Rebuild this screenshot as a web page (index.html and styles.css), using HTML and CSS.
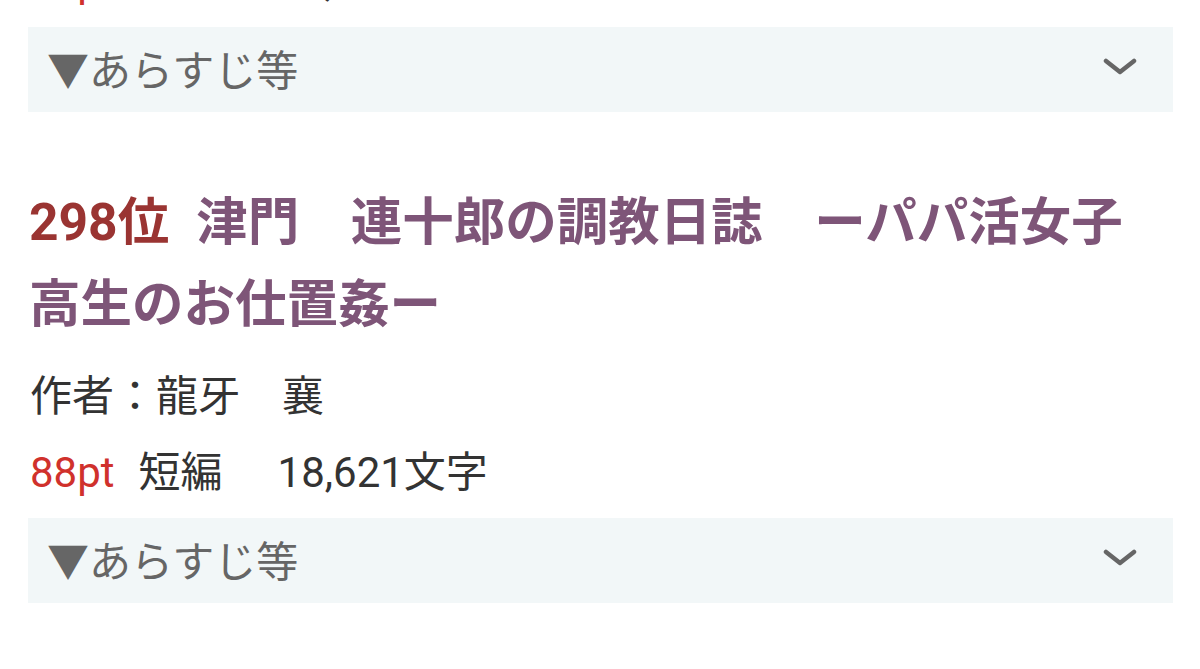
FILE: index.html
```html
<!DOCTYPE html>
<html lang="ja">
<head>
<meta charset="utf-8">
<title>ランキング</title>
<link rel="stylesheet" href="styles.css">
</head>
<body>
<div class="list">
  <div class="entry entry-partial">
    <div class="stats"><span class="pt">88pt</span><span class="type">短編</span><span class="chars">21,593文字</span></div>
    <div class="summary"><span class="summary-label">▼あらすじ等</span>
      <svg class="chev" width="34" height="20" viewBox="0 0 34 20"><path d="M3 4 L17 15 L31 4" fill="none" stroke="#666" stroke-width="4.5" stroke-linecap="round" stroke-linejoin="round"/></svg>
    </div>
  </div>
  <div class="entry">
    <h3 class="title"><span class="rank">298位</span>津門　連十郎の調教日誌　ーパパ活女子高生のお仕置姦ー</h3>
    <div class="author">作者：龍牙　襄</div>
    <div class="stats"><span class="pt">88pt</span><span class="type">短編</span><span class="chars">18,621文字</span></div>
    <div class="summary"><span class="summary-label">▼あらすじ等</span>
      <svg class="chev" width="34" height="20" viewBox="0 0 34 20"><path d="M3 4 L17 15 L31 4" fill="none" stroke="#666" stroke-width="4.5" stroke-linecap="round" stroke-linejoin="round"/></svg>
    </div>
  </div>
</div>
</body>
</html>
```
FILE: styles.css
```css
html, body {
  margin: 0;
  padding: 0;
  background: #fff;
}
body {
  font-family: Roboto, "Noto Sans CJK JP", sans-serif;
  color: #333;
  overflow: hidden;
}
.list {
  margin-top: -56px;
  padding: 0 27px 0 28px;
}
.entry-partial {
  margin-bottom: 70px;
}
.title {
  margin: 0 0 13px;
  font-size: 51.5px;
  line-height: 82px;
  font-weight: 700;
  color: #7e5578;
  padding-left: 1px;
}
.rank {
  color: #9a3432;
  margin-right: 27px;
}
.author, .stats {
  font-size: 42px;
  line-height: 76px;
  padding-left: 2px;
  color: #333;
}
.pt {
  color: #d0312c;
  margin-right: 24px;
}
.type {
  margin-right: 55px;
}
.summary {
  margin-top: 7px;
  height: 85px;
  box-sizing: border-box;
  background: #f2f7f8;
  display: flex;
  align-items: center;
  justify-content: space-between;
  padding: 0 36px 5px 19px;
}
.summary-label {
  font-size: 42px;
  color: #666;
}
.chev {
  display: block;
}
```
